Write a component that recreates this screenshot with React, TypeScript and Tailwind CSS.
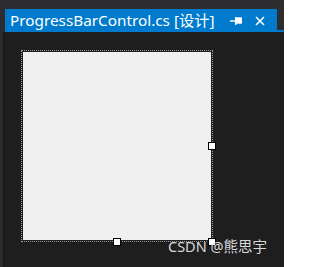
import React from 'react';

const Handle: React.FC<{ className: string }> = ({ className }) => (
    <div className={`absolute w-[8px] h-[8px] bg-white border border-black ${className}`} />
);

export default function App() {
    return (
        <div className="relative w-[284px] h-[267px] bg-[#1e1e1e] flex flex-col overflow-hidden" style={{ fontFamily: '"Noto Sans", "Noto Sans CJK SC", sans-serif' }}>
            {/* title strip */}
            <div className="h-[9px] bg-[#2d2d30]" />
            <div className="flex h-[21px] bg-[#2d2d30]">
                <div className="w-[5px]" />
                <div className="flex items-center w-[272px] bg-[#007acc] pl-[5px] pt-[2px] text-white">
                    <span className="text-[15.3px] leading-none whitespace-nowrap">ProgressBarControl.cs [设计]</span>
                    <svg className="ml-[15px] w-[12px] h-[8px]" viewBox="0 0 12 8" fill="none" stroke="white" strokeWidth="1.4">
                        <path d="M0 4h5" />
                        <rect x="5.7" y="1" width="5.6" height="5" fill="white" />
                        <path d="M5.7 0v8" />
                    </svg>
                    <svg className="ml-[13px] w-[10px] h-[10px]" viewBox="0 0 10 10" stroke="white" strokeWidth="1.6">
                        <path d="M1 1l8 8M9 1l-8 8" />
                    </svg>
                </div>
            </div>
            <div className="flex h-[2px] bg-[#2d2d30]">
                <div className="w-[5px]" />
                <div className="flex-1 bg-[#007acc]" />
            </div>
            {/* editor body */}
            <div className="flex flex-1">
                <div className="w-[4px] bg-[#2d2d30] border-r border-[#141414]" />
                <div className="flex-1 pl-[17px] pt-[18px]">
                    <div className="relative w-[192px] h-[192px] border border-dotted border-[#9a9a9a] p-px">
                        <div className="w-full h-full bg-[#f0f0f0]" />
                        <Handle className="right-[-4px] top-[91px]" />
                        <Handle className="left-[91px] bottom-[-5px]" />
                        <Handle className="right-[-4px] bottom-[-5px]" />
                    </div>
                </div>
            </div>
            <div className="absolute left-[168px] top-[239px] text-[14.5px] leading-none text-[#d8d8d8] whitespace-nowrap">CSDN @熊思宇</div>
        </div>
    );
}
